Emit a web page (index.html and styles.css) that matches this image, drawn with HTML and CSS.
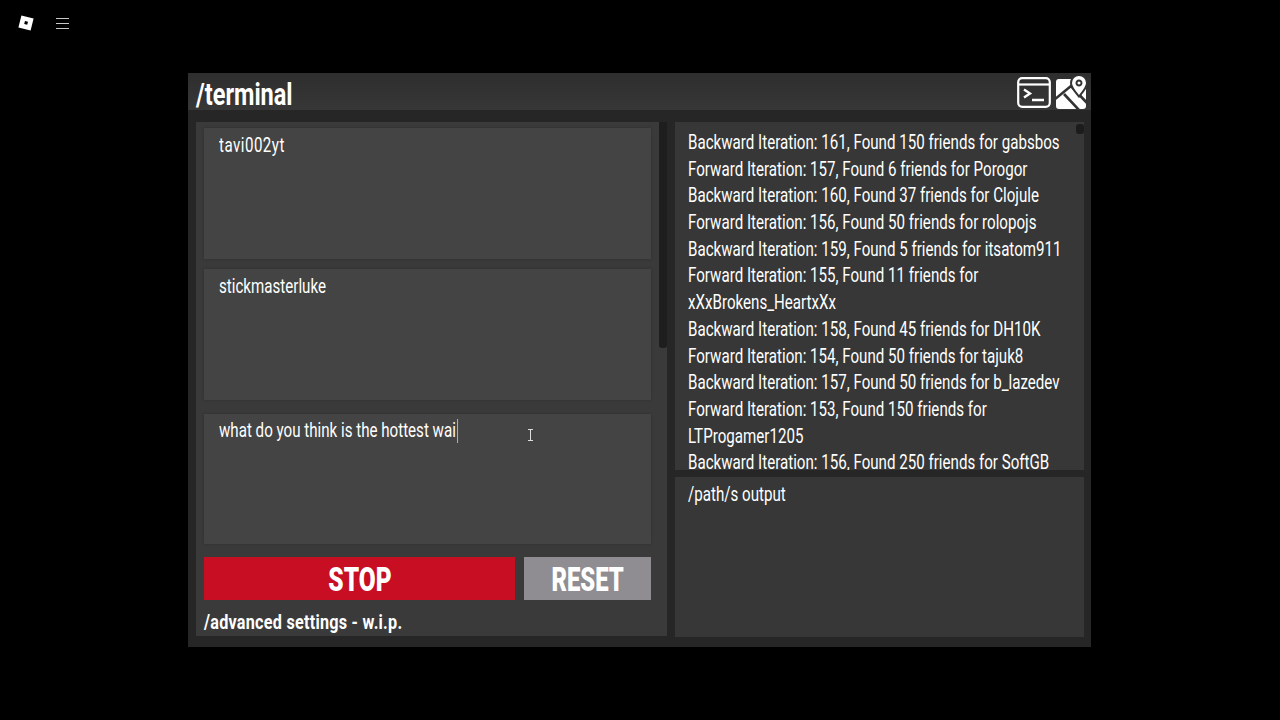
FILE: index.html
```html
<!DOCTYPE html>
<html lang="en">
<head>
<meta charset="utf-8">
<title>/terminal</title>
<link rel="stylesheet" href="styles.css">
</head>
<body>
<header class="topbar">
  <svg class="logo" width="16" height="16" viewBox="0 0 16 16"><path fill="#fff" fill-rule="evenodd" d="M3.4 0.6 15.6 3.4 12.6 15.6 0.4 12.6ZM7 6 6.2 9 9.2 9.8 10 6.8Z"/></svg>
  <div class="burger"><span></span><span></span><span></span></div>
</header>
<main class="window">
  <div class="titlebar">
    <h1 class="title"><span class="cond">/terminal</span></h1>
    <div class="tools">
      <svg width="34" height="31" viewBox="0 0 34 31" fill="none" stroke="#fff"><rect x="1.2" y="1.2" width="31.6" height="28.6" rx="4" stroke-width="2.2"/><path d="M1.5 7.5H32.5" stroke-width="2.2"/><path d="M7 12.5 13 16.5 7 20.5M15 23H27" stroke-width="2.4"/></svg>
      <svg width="33" height="33" viewBox="0 0 33 33"><rect x="1" y="3" width="30" height="30" rx="3" fill="#fff"/><path d="M-1 24 16 10 33 28" fill="none" stroke="#333" stroke-width="2.6"/><path d="M9 18 24 34" fill="none" stroke="#333" stroke-width="2.6"/><path fill="#fff" stroke="#333" stroke-width="2" fill-rule="evenodd" d="M24 -1A8 8 0 0 1 32 7C32 11.500 27 17 24 20.500 21 17 16 11.500 16 7A8 8 0 0 1 24 -1ZM24 4.500A2.500 2.500 0 1 0 24 9.500 2.500 2.500 0 1 0 24 4.500Z"/></svg>
    </div>
  </div>
  <div class="body">
    <section class="left">
      <div class="thumb"></div>
      <div class="field first"><span class="cond">tavi002yt</span></div>
      <div class="field second"><span class="cond">stickmasterluke</span></div>
      <div class="field third"><span class="cond">what do you think is the hottest wai<span class="caret"></span></span></div>
      <div class="actions">
        <button class="btn stop"><span class="cond mid">STOP</span></button>
        <button class="btn reset"><span class="cond mid">RESET</span></button>
      </div>
      <p class="advanced"><span class="cond">/advanced settings - w.i.p.</span></p>
      <svg class="ibeam" width="7" height="12" viewBox="0 0 7 12" fill="none" stroke="#ddd"><path d="M1 .5H6M3.500 .5V11.500M1 11.500H6"/></svg>
    </section>
    <section class="right">
      <div class="log">
        <span class="knob"></span>
        <p class="cond">Backward Iteration: 161, Found 150 friends for gabsbos</p>
        <p class="cond">Forward Iteration: 157, Found 6 friends for Porogor</p>
        <p class="cond">Backward Iteration: 160, Found 37 friends for Clojule</p>
        <p class="cond">Forward Iteration: 156, Found 50 friends for rolopojs</p>
        <p class="cond">Backward Iteration: 159, Found 5 friends for itsatom911</p>
        <p class="cond">Forward Iteration: 155, Found 11 friends for<br>xXxBrokens_HeartxXx</p>
        <p class="cond">Backward Iteration: 158, Found 45 friends for DH10K</p>
        <p class="cond">Forward Iteration: 154, Found 50 friends for tajuk8</p>
        <p class="cond">Backward Iteration: 157, Found 50 friends for b_lazedev</p>
        <p class="cond">Forward Iteration: 153, Found 150 friends for<br>LTProgamer1205</p>
        <p class="cond">Backward Iteration: 156, Found 250 friends for SoftGB</p>
      </div>
      <div class="output"><span class="cond">/path/s output</span></div>
    </section>
  </div>
</main>
</body>
</html>
```
FILE: styles.css
```css
* { box-sizing: border-box; }
html, body { margin: 0; height: 720px; overflow: hidden; background: #000; }
body { font-family: Roboto, "Liberation Sans", sans-serif; color: #fff; padding-top: 73px; display: flex; flex-direction: column; align-items: flex-start; position: relative; }
.cond { display: inline-block; white-space: nowrap; transform: scaleX(.72); transform-origin: 0 50%; }
.cond.mid { transform-origin: 50% 50%; }
.topbar { position: absolute; left: 18px; top: 15px; display: flex; align-items: center; gap: 22px; }
.logo { display: block; }
.burger { width: 13px; display: flex; flex-direction: column; gap: 4px; }
.burger span { display: block; height: 1px; background: #c8c8c8; }
.window { margin-left: 188px; width: 903px; height: 574px; background: #262626; display: flex; flex-direction: column; }
.titlebar { height: 37px; background: linear-gradient(#2e2e2e, #373737); display: flex; justify-content: space-between; align-items: center; padding: 0 3px 0 8px; }
.title { margin: 0; font-size: 32px; font-weight: 700; line-height: 37px; padding-top: 5px; }
.title .cond { transform: scaleX(.735); }
.tools { display: flex; gap: 4px; align-items: center; margin-top: 2px; }
.tools svg { display: block; }
.body { display: flex; gap: 8px; padding: 12px 6px 10px 8px; flex: 1; }
.left { width: 471px; height: 514px; background: #3a3a3a; padding: 6px 16px 0 8px; position: relative; }
.thumb { position: absolute; right: 0; top: 0; width: 8px; height: 226px; background: #1e1e1e; border-radius: 0 0 3px 3px; }
.field { height: 131px; background: #444; padding: 4px 15px; font-size: 21px; line-height: 26px; box-shadow: 0 0 3px rgba(0, 0, 0, .2); }
.first { letter-spacing: .65px; }
.second { margin-top: 10px; }
.third { margin-top: 14px; height: 130px; padding-top: 3px; }
.caret { display: inline-block; width: 1px; height: 24px; background: #ddd; vertical-align: -6px; margin-left: 2px; }
.actions { display: flex; gap: 9px; margin-top: 13px; height: 43px; }
.btn { border: 0; padding: 1px 0 0; font: inherit; font-size: 34px; font-weight: 900; color: #fff; line-height: 42px; }
.stop { width: 311px; background: #c80e23; }
.reset { width: 127px; background: #8f8d92; }
.reset .cond { transform: scaleX(.7); }
.advanced { margin: 9px 0 0; font-size: 20px; font-weight: 700; line-height: 26px; letter-spacing: .3px; }
.advanced .cond { transform: scaleX(.81); }
.ibeam { position: absolute; left: 331px; top: 307px; }
.right { width: 409px; display: flex; flex-direction: column; gap: 7px; }
.log { height: 348px; background: #373737; padding: 7px 0 0 13px; overflow: hidden; position: relative; font-size: 21px; line-height: 26.68px; }
.log p { margin: 0; display: block; }
.knob { position: absolute; right: 0; top: 2px; width: 8px; height: 10px; background: #1c1c1c; border-radius: 3px; }
.output { height: 160px; background: #373737; padding: 4px 13px; font-size: 21px; line-height: 26px; }
```
